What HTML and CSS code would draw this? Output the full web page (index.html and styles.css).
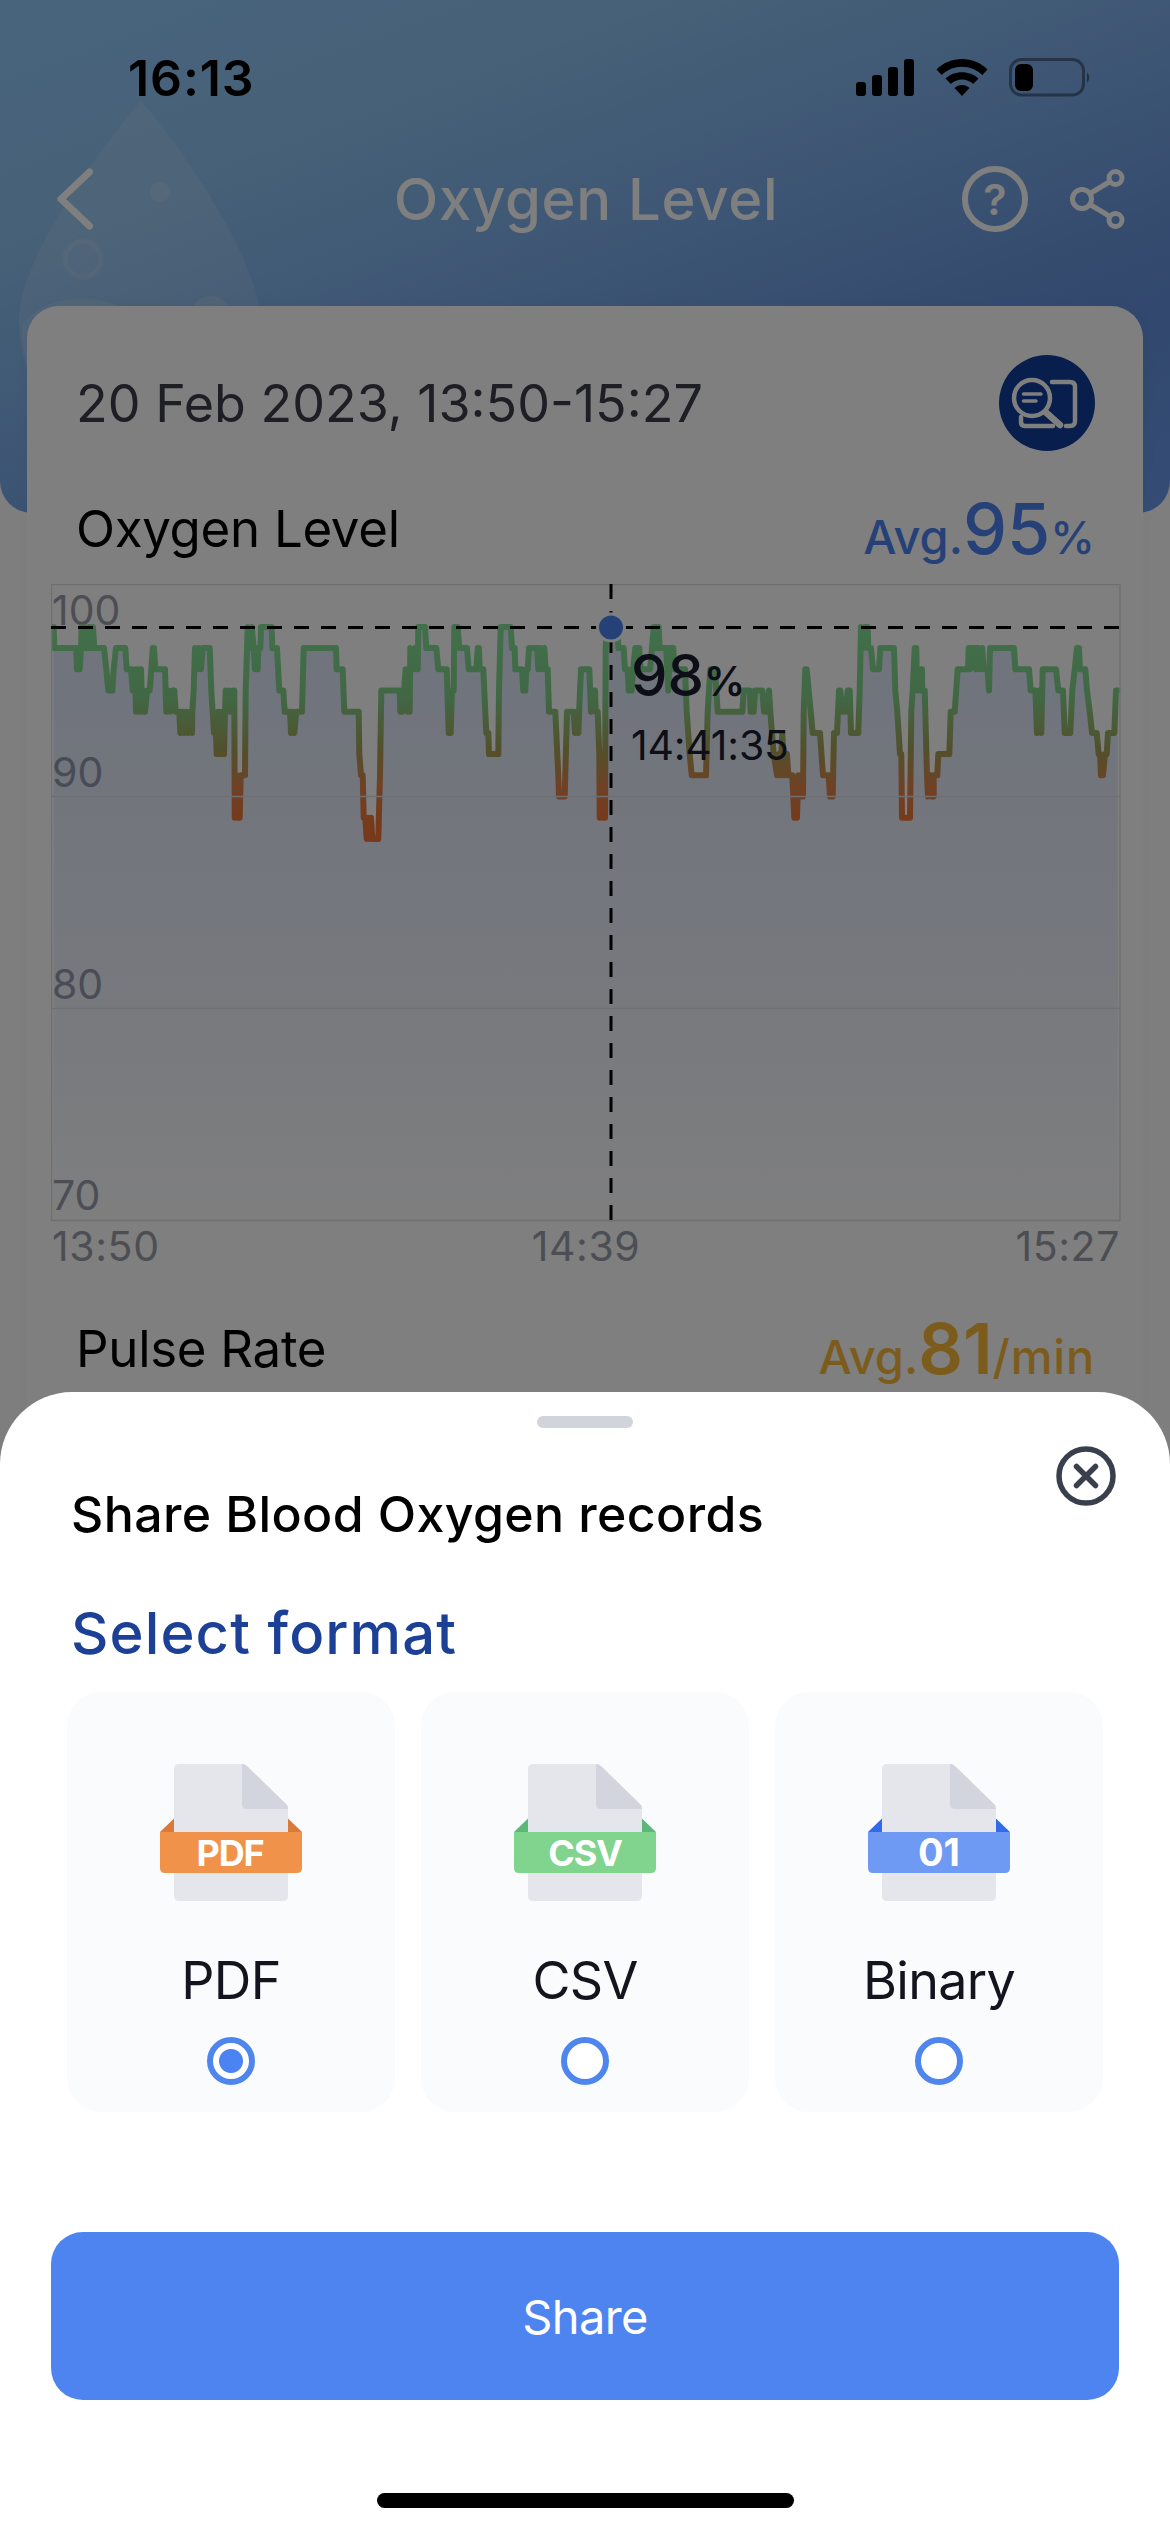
FILE: index.html
```
<!DOCTYPE html>
<html lang="en">
<head>
    <meta charset="UTF-8">
    <title>Oxygen Level</title>
    <meta name="viewport" content="width=device-width, initial-scale=1.0">
    <link rel="stylesheet" href="styles.css">
</head>
<body>

<div class="page">
    <div class="hero">
        <svg class="drop" width="300" height="513" viewBox="0 0 300 513">
            <path d="M141 101 C155 116 262 250 262 330 C262 400 210 450 140 450 C70 450 19 395 19 320 C19 250 126 116 141 101 Z" fill="#fff" fill-opacity=".13"/>
            <path d="M22 325 C45 292 105 290 140 318 L140 450 C70 450 22 400 22 325 Z" fill="#fff" fill-opacity=".13"/>
            <circle cx="83" cy="259" r="18" fill="#fff" fill-opacity=".05" stroke="#fff" stroke-opacity=".12" stroke-width="5"/>
            <circle cx="160" cy="192" r="10" fill="#fff" fill-opacity=".14"/>
            <circle cx="211" cy="316" r="20" fill="#fff" fill-opacity=".14"/>
        </svg>
    </div>

    <div class="status-bar">
        <span class="time">16:13</span>
        <svg class="status-icons" width="240" height="40" viewBox="0 0 240 40">
            <rect x="0" y="24" width="10" height="14" rx="3"/>
            <rect x="16" y="17" width="10" height="21" rx="3"/>
            <rect x="32" y="9" width="10" height="29" rx="3"/>
            <rect x="48" y="1" width="10" height="37" rx="3"/>
            <path d="M80.5 11.5 C94 -2.5 118 -2.5 131.500 11.5 L126.300 17 C115 6 97 6 85.700 17 Z"/>
            <path d="M89.500 20.500 C98 12 114 12 122.500 20.500 L117.200 26 C111 20 101 20 94.800 26 Z"/>
            <path d="M98.500 30 C102.500 26 109.500 26 113.500 30 L106 38 Z"/>
            <rect x="154.500" y="1.500" width="73" height="35.500" rx="11" class="battery-shell"/>
            <path d="M231 14 Q235.500 19.500 231 25 Z" class="battery-tip"/>
            <rect x="159" y="6" width="18" height="27" rx="6"/>
        </svg>
    </div>

    <div class="nav-bar">
        <svg class="back" width="44" height="66" viewBox="0 0 44 66">
            <path d="M36.500 6 L8 33 L36.500 60"/>
        </svg>
        <h1>Oxygen Level</h1>
        <div class="help">?</div>
        <svg class="share-icon" width="58" height="66" viewBox="0 0 58 66">
            <circle cx="13" cy="33" r="9.500"/>
            <circle cx="46.500" cy="12" r="6.500"/>
            <circle cx="46.500" cy="54" r="6.500"/>
            <path d="M21 27.500 L41 15.500 M21 38.500 L41 50.500"/>
        </svg>
    </div>

    <div class="card">
        <div class="record-head">
            <span class="record-date">20 Feb 2023, 13:50-15:27</span>
            <div class="detail-btn">
                <svg width="96" height="96" viewBox="0 0 96 96">
                    <path d="M53 27 H71 Q76 27 76 32 V66 Q76 71 71 71 H67 M22 62 V67 Q22 71 26 71 H54"/>
                    <circle cx="33" cy="43" r="18"/>
                    <path d="M46.500 57 L61 70" class="handle-line"/>
                    <path d="M24.500 39 H42 M24.500 46 H37" class="doc-line"/>
                </svg>
            </div>
        </div>

        <div class="metric">
            <span class="metric-name">Oxygen Level</span>
            <span class="metric-value blue">Avg.<b>95</b><i>%</i></span>
        </div>

        <div class="chart">
            <svg width="1092" height="736" viewBox="0 0 1092 736">
                <defs>
                    <linearGradient id="lineFill" gradientUnits="userSpaceOnUse" x1="0" y1="43" x2="0" y2="240">
                        <stop offset="0" stop-color="#84e096"/>
                        <stop offset=".35" stop-color="#82d08a"/>
                        <stop offset=".62" stop-color="#a6a058"/>
                        <stop offset=".82" stop-color="#e0824a"/>
                        <stop offset="1" stop-color="#ec7434"/>
                    </linearGradient>
                    <linearGradient id="areaFill" gradientUnits="userSpaceOnUse" x1="0" y1="43" x2="0" y2="637">
                        <stop offset="0" stop-color="#4c78d8" stop-opacity=".18"/>
                        <stop offset=".5" stop-color="#4c78d8" stop-opacity=".12"/>
                        <stop offset="1" stop-color="#4c78d8" stop-opacity=".01"/>
                    </linearGradient>
                </defs>
                <text x="1" y="41" class="tick">100</text>
                <text x="1" y="203" class="tick">90</text>
                <text x="1" y="415" class="tick">80</text>
                <text x="1" y="626" class="tick">70</text>
                <path id="area" fill="url(#areaFill)"/>
                <path id="line" stroke="url(#lineFill)"/>
                <path class="grid" d="M0 .5 H1069 V636.500 H.5 V0 M0 212.500 H1069 M0 424.500 H1069"/>
                <path class="cursor" d="M0 43.500 H1069"/>
                <path class="cursor" d="M560 0 V636"/>
                <circle cx="560" cy="43.500" r="13.500" class="cursor-dot"/>
                <text x="1" y="677" class="tick time-tick">13:50</text>
                <text x="535" y="677" class="tick time-tick" text-anchor="middle">14:39</text>
                <text x="1069" y="677" class="tick time-tick" text-anchor="end">15:27</text>
            </svg>
            <div class="tooltip">
                <div class="tooltip-value">98<i>%</i></div>
                <div class="tooltip-time">14:41:35</div>
            </div>
        </div>

        <div class="metric">
            <span class="metric-name">Pulse Rate</span>
            <span class="metric-value yellow">Avg.<b>81</b><span class="unit">/min</span></span>
        </div>
    </div>
</div>

<div class="overlay"></div>

<div class="sheet">
    <div class="grabber"></div>
    <div class="sheet-head">
        <h2>Share Blood Oxygen records</h2>
        <svg class="close" width="60" height="60" viewBox="0 0 60 60">
            <circle cx="30" cy="30" r="27"/>
            <path d="M20.500 20.500 L39.500 39.500 M39.500 20.500 L20.500 39.500"/>
        </svg>
    </div>
    <h3>Select format</h3>

    <div class="formats">
        <div class="format pdf">
            <svg width="142" height="137" viewBox="0 0 142 137">
                <path class="ear" d="M0 68 L14 54.500 H128 L142 68 Z"/>
                <path class="paper" d="M19 0 H84 L128 42 V132 Q128 137 123 137 H19 Q14 137 14 132 V5 Q14 0 19 0 Z"/>
                <path class="fold" d="M82 0 Q85 0 87 2 L126 40 Q128 42 128 45 H87 Q82 45 82 40 Z"/>
                <path class="band" d="M0 68 H142 V104 Q142 109 137 109 H5 Q0 109 0 104 Z"/>
                <text x="70" y="101.500">PDF</text>
            </svg>
            <span class="format-name">PDF</span>
            <span class="radio checked"></span>
        </div>
        <div class="format csv">
            <svg width="142" height="137" viewBox="0 0 142 137">
                <path class="ear" d="M0 68 L14 54.500 H128 L142 68 Z"/>
                <path class="paper" d="M19 0 H84 L128 42 V132 Q128 137 123 137 H19 Q14 137 14 132 V5 Q14 0 19 0 Z"/>
                <path class="fold" d="M82 0 Q85 0 87 2 L126 40 Q128 42 128 45 H87 Q82 45 82 40 Z"/>
                <path class="band" d="M0 68 H142 V104 Q142 109 137 109 H5 Q0 109 0 104 Z"/>
                <text x="71" y="101.500">CSV</text>
            </svg>
            <span class="format-name">CSV</span>
            <span class="radio"></span>
        </div>
        <div class="format binary">
            <svg width="142" height="137" viewBox="0 0 142 137">
                <path class="ear" d="M0 68 L14 54.500 H128 L142 68 Z"/>
                <path class="paper" d="M19 0 H84 L128 42 V132 Q128 137 123 137 H19 Q14 137 14 132 V5 Q14 0 19 0 Z"/>
                <path class="fold" d="M82 0 Q85 0 87 2 L126 40 Q128 42 128 45 H87 Q82 45 82 40 Z"/>
                <path class="band" d="M0 68 H142 V104 Q142 109 137 109 H5 Q0 109 0 104 Z"/>
                <text x="71" y="102">01</text>
            </svg>
            <span class="format-name">Binary</span>
            <span class="radio"></span>
        </div>
    </div>

    <button class="share-btn">Share</button>
    <div class="home-indicator"></div>
</div>

<script src="chart.js"></script>
</body>
</html>
```
FILE: styles.css
```
* {
    margin: 0;
    padding: 0;
    box-sizing: border-box;
    font-family: 'Inter', 'Liberation Sans', sans-serif;
}

body {
    width: 1170px;
    height: 2532px;
    background: #fdfdfd;
    overflow: hidden;
}

.page {
    position: relative;
    height: 2532px;
    overflow: hidden;
}

.hero {
    position: absolute;
    top: 0;
    left: 0;
    width: 100%;
    height: 513px;
    background: linear-gradient(160deg, #90c8fa 0%, #8ec2f0 26%, #7aaae8 52%, #6a98de 68%, #6490dc 78%, #6a9aec 100%);
    border-radius: 0 0 32px 32px;
    overflow: hidden;
}

.drop {
    display: block;
}

.status-bar {
    position: relative;
    height: 156px;
    padding: 0 74px 0 128px;
    display: flex;
    justify-content: space-between;
    align-items: center;
}

.time {
    font-size: 50px;
    font-weight: 600;
    letter-spacing: 0.9px;
}

.battery-shell {
    fill: none;
    stroke: #000;
    stroke-opacity: 0.4;
    stroke-width: 3;
}

.battery-tip {
    fill-opacity: 0.45;
}

.nav-bar {
    position: relative;
    height: 85px;
    padding: 0 43px 0 53px;
    display: flex;
    align-items: center;
    color: #fff;
}

.back,
.share-icon {
    fill: none;
    stroke: #fff;
    stroke-linecap: round;
    stroke-linejoin: round;
}

.back {
    stroke-width: 7;
}

.share-icon {
    stroke-width: 5;
    margin-left: 41px;
}

.nav-bar h1 {
    flex: 1;
    padding-left: 113px;
    text-align: center;
    font-size: 58px;
    font-weight: 500;
    letter-spacing: 0.7px;
    white-space: nowrap;
}

.help {
    width: 66px;
    height: 66px;
    border: 6px solid #fff;
    border-radius: 50%;
    display: flex;
    justify-content: center;
    align-items: center;
    font-size: 43px;
    font-weight: 600;
}

.card {
    position: relative;
    margin: 65px 27px 0;
    height: 2300px;
    background: #fff;
    border-radius: 32px;
    box-shadow: 0 0 20px rgba(0,0,0,0.03);
}

.record-head {
    height: 194px;
    padding: 0 48px 0 49px;
    display: flex;
    justify-content: space-between;
    align-items: center;
}

.record-date {
    font-size: 52px;
    color: #3c3c4a;
}

.detail-btn {
    width: 96px;
    height: 96px;
    border-radius: 50%;
    background: #103c98;
}

.detail-btn svg {
    display: block;
    fill: none;
    stroke: #fff;
    stroke-width: 4.5;
    stroke-linecap: round;
}

.detail-btn .handle-line {
    stroke-width: 6.5;
}

.detail-btn .doc-line {
    stroke-width: 3.5;
}

.metric {
    height: 84px;
    padding: 0 48px 0 49px;
    display: flex;
    justify-content: space-between;
    align-items: flex-start;
    line-height: 57px;
}

.metric-name {
    font-size: 51px;
    letter-spacing: -0.3px;
}

.metric-value {
    font-size: 47px;
    font-weight: 500;
    white-space: nowrap;
}

.metric-value b {
    font-size: 70px;
    font-weight: 500;
}

.metric-value.yellow b {
    font-weight: 600;
}

.metric-value i {
    font-style: normal;
    font-size: 45px;
}

.metric-value .unit {
    letter-spacing: 0.8px;
}

.blue {
    color: #4c83ee;
}

.yellow {
    color: #f8b83a;
}

.chart {
    position: relative;
    height: 736px;
    margin-left: 24px;
}

.chart svg {
    display: block;
}

.tick {
    font-size: 41px;
    fill: #9a9da8;
}

.time-tick {
    letter-spacing: 0.6px;
}

.grid {
    fill: none;
    stroke: #dcdee4;
    stroke-width: 1.5;
}

#line {
    fill: none;
    stroke-width: 6;
    stroke-linecap: round;
    stroke-linejoin: round;
}

.cursor {
    stroke: #000;
    stroke-width: 3;
    stroke-dasharray: 15 12;
}

.cursor-dot {
    fill: #4c83ee;
    stroke: #fff;
    stroke-width: 3;
}

.tooltip {
    position: absolute;
    left: 580px;
    top: 60px;
    color: #1c1c30;
}

.tooltip-value {
    font-size: 58px;
    font-weight: 500;
    line-height: 62px;
}

.tooltip-value i {
    font-style: normal;
    font-size: 41px;
    font-weight: 600;
}

.tooltip-time {
    margin-top: 8px;
    font-size: 41px;
    line-height: 50px;
    letter-spacing: -0.2px;
}

.overlay {
    position: fixed;
    inset: 0;
    background: rgba(0,0,0,0.5);
}

.sheet {
    position: fixed;
    left: 0;
    right: 0;
    bottom: 0;
    height: 1140px;
    padding-top: 24px;
    background: #fff;
    border-radius: 72px 72px 0 0;
}

.grabber {
    width: 96px;
    height: 12px;
    margin: 0 auto;
    border-radius: 6px;
    background: #d1d4db;
}

.sheet-head {
    display: flex;
    justify-content: space-between;
    align-items: flex-start;
    padding: 18px 54px 0 71px;
}

.sheet-head h2 {
    margin-top: 38px;
    font-size: 50px;
    font-weight: 500;
    line-height: 60px;
    letter-spacing: 0.4px;
}

.close {
    fill: none;
    stroke: #3a3f4e;
    stroke-width: 5.5;
    stroke-linecap: round;
}

.sheet h3 {
    margin: 54px 0 24px 71px;
    font-size: 58px;
    font-weight: 500;
    line-height: 70px;
    letter-spacing: 1.1px;
    color: #1c4096;
}

.formats {
    display: flex;
    gap: 26px;
    padding: 0 67px;
}

.format {
    flex: 1;
    height: 420px;
    padding-top: 72px;
    border-radius: 34px;
    background: #fafbfd;
    display: flex;
    flex-direction: column;
    align-items: center;
}

.format text {
    font-size: 36px;
    font-weight: 700;
    letter-spacing: -1.2px;
    fill: #fff;
    text-anchor: middle;
}

.format.binary text {
    font-size: 38px;
    letter-spacing: 0;
}

.paper {
    fill: #e5e6eb;
}

.fold {
    fill: #d2d5dd;
}

.pdf .band {
    fill: #f0924a;
}

.pdf .ear {
    fill: #d97a3a;
}

.csv .band {
    fill: #80d48e;
}

.csv .ear {
    fill: #5cb87a;
}

.binary .band {
    fill: #6f9af3;
}

.binary .ear {
    fill: #316aea;
}

.format-name {
    margin: 50px 0 26px;
    font-size: 52px;
    line-height: 60px;
    letter-spacing: -0.7px;
    color: #14141f;
}

.radio {
    width: 48px;
    height: 48px;
    border: 6px solid #4f86ee;
    border-radius: 50%;
    background: #fff;
}

.radio.checked {
    background: radial-gradient(circle, #4c83f2 11.5px, #fff 12.5px);
}

.share-btn {
    display: block;
    width: 1068px;
    height: 168px;
    margin: 120px auto 93px;
    border: none;
    border-radius: 32px;
    background: #4d84f0;
    color: #fff;
    font-size: 47px;
    letter-spacing: -0.6px;
}

.home-indicator {
    width: 417px;
    height: 15px;
    margin: 0 auto;
    border-radius: 8px;
    background: #000;
}
```
FILE: chart.js
```
// [time, SpO2] pairs, three time units per pixel
const samples = [
    [8,98],[10,97],[76,97],[78,96],[86,96],[90,97],[92,98],[98,97],[104,98],[110,97],[116,98],[122,97],[126,98],[130,97],
    [159,97],[166,96],[172,95],[184,95],[188,96],[195,97],[223,97],[227,96],[240,96],[245,95],[252,96],[255,94],[259,96],
    [264,94],[270,96],[274,94],[282,94],[288,95],[296,95],[301,96],[305,97],[309,97],[313,96],[342,96],[346,94],[352,95],
    [358,94],[364,95],[370,95],[374,94],[385,94],[388,93],[394,94],[399,93],[406,94],[412,93],[419,94],[423,93],[424,94],[428,95],
    [432,97],[438,96],[444,97],[450,96],[455,97],[476,97],[481,95],[489,93],[495,93],[497,92],[502,94],[508,92],[514,94],
    [519,92],[522,94],[524,95],[530,94],[534,95],[540,94],[546,95],[550,95],[551,89],[556,91],[560,89],[566,89],[569,91],
    [582,91],[584,95],[590,98],[596,97],[602,98],[608,97],[612,96],[618,97],[620,96],[622,97],[628,97],[630,98],[662,98],[664,97],[678,97],
    [685,95],[697,95],[701,94],[717,94],[720,93],[726,94],[730,93],[736,94],[753,94],[758,97],
    [855,97],[857,96],[875,96],[880,94],[923,94],[925,92],[930,91],[935,91],[938,89],[943,89],[947,88],[952,89],[957,88],[960,89],[964,88],
    [982,88],[987,91],[991,95],[1046,95],[1048,94],[1054,94],[1064,96],[1070,94],[1076,94],[1078,97],[1086,96],[1092,97],[1096,96],[1100,96],[1102,98],
    [1122,98],[1126,97],[1156,97],[1162,96],[1187,96],[1193,93],[1199,93],[1203,95],[1208,95],[1210,98],[1220,98],[1225,97],[1248,97],[1253,96],
    [1276,96],[1280,97],[1284,97],[1286,96],[1297,96],[1303,94],[1306,93],[1312,93],[1314,92],[1342,92],[1344,95],[1349,98],
    [1379,98],[1383,97],[1391,97],[1393,96],[1413,96],[1417,95],[1423,95],[1426,96],[1430,96],[1434,97],[1458,97],[1462,96],[1468,97],[1474,96],[1480,97],
    [1484,96],[1490,96],[1494,94],[1513,94],[1516,93],[1522,91],[1524,90],[1541,90],[1548,94],[1568,94],[1572,93],[1578,94],[1582,93],[1587,95],[1590,96],
    [1615,96],[1620,94],[1624,95],[1632,95],[1634,94],[1640,94],[1645,92],[1646,89],[1651,91],[1656,89],[1662,89],[1664,97],
    [1667,98],[1700,98],[1702,97],[1718,97],[1722,96],[1730,96],[1733,95],[1742,95],[1746,96],[1753,97],[1765,97],[1769,96],
    [1797,96],[1803,97],[1808,98],[1812,97],[1816,98],[1820,97],[1823,98],[1826,97],[1846,97],[1852,95],[1856,97],[1867,97],[1870,96],
    [1902,96],[1907,94],[1916,92],[1922,91],[1965,91],[1970,94],[1978,96],[1992,96],[2000,94],[2074,94],[2078,95],
    [2096,95],[2099,94],[2108,94],[2112,95],[2134,95],[2139,94],[2148,94],[2154,95],[2158,94],[2168,92],[2178,91],[2184,92],
    [2188,91],[2194,93],[2200,91],[2208,92],[2212,91],[2224,91],[2230,89],[2238,89],[2242,91],[2248,90],[2256,90],[2258,94],[2263,96],[2267,96],[2273,95],
    [2285,93],[2307,93],[2316,91],[2333,91],[2337,90],[2345,90],[2349,93],[2358,93],[2364,95],[2368,95],[2374,94],[2384,94],
    [2390,95],[2396,95],[2400,93],[2422,93],[2426,95],[2430,98],[2436,97],[2442,98],[2450,98],[2452,97],[2460,97],[2466,96],[2484,96],[2488,97],
    [2529,97],[2533,95],[2539,94],[2547,92],[2551,92],[2553,89],[2577,89],[2581,94],[2585,95],[2591,97],[2596,97],[2598,95],[2604,96],[2608,95],[2613,96],
    [2614,95],[2621,95],[2628,91],[2631,90],[2638,91],[2642,90],[2648,90],[2648,91],[2659,91],[2662,92],[2695,92],[2699,94],[2711,94],[2720,96],
    [2751,96],[2753,97],[2758,96],[2763,97],[2773,97],[2776,96],[2782,97],[2788,96],[2794,97],[2798,96],[2810,96],[2814,95],[2817,97],[2889,97],
    [2893,96],[2934,96],[2939,95],[2953,95],[2958,93],[2964,95],[2971,93],[2975,96],[3015,96],[3022,95],[3036,95],[3041,93],
    [3058,93],[3064,95],[3071,96],[3078,97],[3084,97],[3087,96],[3103,96],[3108,95],[3116,94],[3123,93],[3137,93],[3143,92],
    [3147,92],[3150,91],[3156,91],[3162,92],[3167,92],[3171,93],[3190,93],[3195,95],[3200,95]
];

const top100 = 0.5;
const unit = 21.2;

const points = samples.map(([t, v]) => (t / 3).toFixed(1) + ' ' + (top100 + (100 - v) * unit).toFixed(1));
const path = 'M' + points.join(' L');

document.getElementById('line').setAttribute('d', path);
document.getElementById('area').setAttribute('d', path + ' V636 H3 Z');
```
